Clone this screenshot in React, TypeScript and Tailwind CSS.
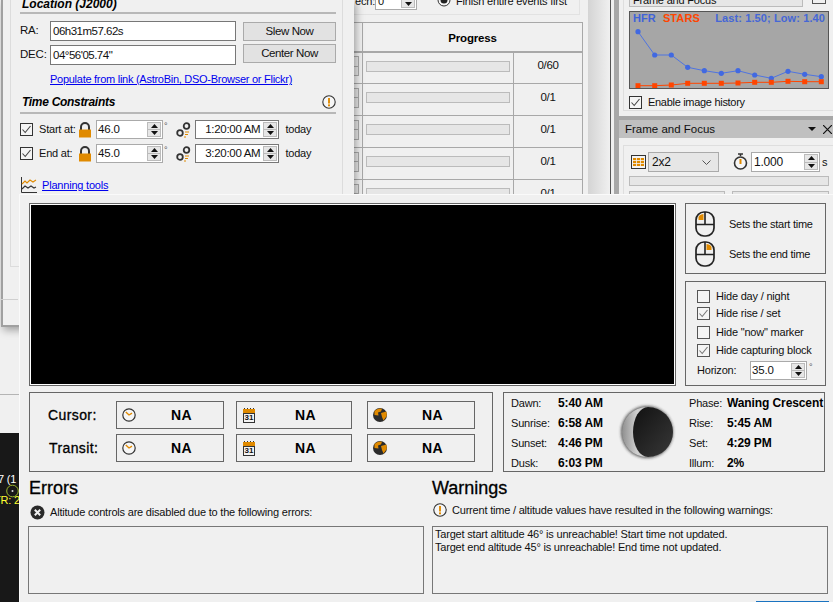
import type { ReactNode } from 'react'

const ORANGE = '#e08a00'
const hfr = [[8, 19.7], [24.7, 43], [41.3, 43], [57.7, 55.3], [74.3, 58.7], [91.3, 61.3], [108, 58.7], [124.7, 63], [141.3, 66.3], [158, 59.3], [174.7, 62.3], [191.3, 64.7]]
const stars = [73.7, 73.7, 73, 71.3, 71.3, 71.3, 71, 70.3, 70.3, 69.3, 69.7, 69.7]

function Check({ on = true, soft = false }: { on?: boolean; soft?: boolean }) {
  return (
    <span className={`flex h-[13px] w-[13px] shrink-0 items-center justify-center border ${soft ? 'border-[#555]' : 'border-[#333]'} bg-[#f4f4f4]`}>
      {on && (
        <svg width="11" height="11" viewBox="0 0 11 11">
          <path d="M1.5 5.5 L4.2 8.5 L9.5 2" fill="none" stroke={soft ? '#777' : '#444'} strokeWidth="1.1" />
        </svg>
      )}
    </span>
  )
}

function Spin({ className = '' }: { className?: string }) {
  return (
    <span className={`flex w-[14px] shrink-0 flex-col border border-[#bbb] bg-[#e6e6e6] ${className}`}>
      <span className="flex flex-1 items-center justify-center border-b border-[#bbb]">
        <svg width="7" height="4" viewBox="0 0 7 4"><path d="M3.5 0 L7 4 L0 4 Z" fill="#111" /></svg>
      </span>
      <span className="flex flex-1 items-center justify-center">
        <svg width="7" height="4" viewBox="0 0 7 4"><path d="M0 0 L7 0 L3.5 4 Z" fill="#111" /></svg>
      </span>
    </span>
  )
}

function Lock() {
  return (
    <svg width="14" height="16" viewBox="0 0 14 16" className="shrink-0">
      <path d="M3 8 V5 a4 4 0 0 1 8 0 V8" fill="none" stroke="#333" strokeWidth="2" />
      <rect x="1" y="7.5" width="12" height="8" fill={ORANGE} />
    </svg>
  )
}

function Link2() {
  return (
    <svg width="15" height="16" viewBox="0 0 15 16" className="shrink-0">
      <circle cx="4" cy="11" r="2.8" fill="none" stroke="#333" strokeWidth="1.8" />
      <circle cx="10.5" cy="4" r="2.8" fill="none" stroke="#333" strokeWidth="1.8" />
      <path d="M9 10 h4 M9 12.5 h3 M8 15 h2" stroke={ORANGE} strokeWidth="1.2" />
    </svg>
  )
}

function WarnIcon({ size = 14 }: { size?: number }) {
  return (
    <svg width={size} height={size} viewBox="0 0 14 14" className="shrink-0">
      <circle cx="7" cy="7" r="6.2" fill="#f6f6f6" stroke="#333" strokeWidth="1.1" />
      <path d="M7 3 V8.4" stroke={ORANGE} strokeWidth="1.9" />
      <rect x="6" y="9.4" width="2" height="1.9" fill={ORANGE} />
    </svg>
  )
}

function MouseIcon({ side }: { side: 'left' | 'right' }) {
  return (
    <svg width="20" height="26" viewBox="0 0 20 26" className="shrink-0">
      <rect x="1" y="1" width="18" height="24" rx="8" fill="#f0f0f0" stroke="#222" strokeWidth="1.7" />
      <path d="M1 13.5 H19 M10 1 V13.5" stroke="#222" strokeWidth="1.6" />
      {side === 'left'
        ? <path d="M3.5 9 V6.5 Q3.5 3.5 8.5 3 V9 Z" fill={ORANGE} />
        : <path d="M16.5 9 V6.5 Q16.5 3.5 11.5 3 V9 Z" fill={ORANGE} />}
    </svg>
  )
}

function ClockIcon() {
  return (
    <svg width="14" height="14" viewBox="0 0 14 14" className="shrink-0">
      <circle cx="7" cy="7" r="6.2" fill="#f6f6f6" stroke="#333" strokeWidth="1.2" />
      <path d="M3.8 4 L7 7 L10 5.2" fill="none" stroke={ORANGE} strokeWidth="1.4" />
    </svg>
  )
}

function CalendarIcon() {
  return (
    <span className="flex w-[14px] shrink-0 justify-center">
      <span className="flex h-[15px] w-[12px] flex-col">
        <span className="flex h-[2px] justify-between px-[1px]">
          <span className="w-[1px] bg-[#333]" />
          <span className="w-[1px] bg-[#333]" />
          <span className="w-[1px] bg-[#333]" />
          <span className="w-[1px] bg-[#333]" />
        </span>
        <span className="h-[4px] bg-[#e08a00]" />
        <span className="flex flex-1 items-center justify-center border border-[#333] bg-[#f4f4f4] text-[8px] leading-none font-bold tracking-[0px]">31</span>
      </span>
    </span>
  )
}

function GlobeIcon() {
  return (
    <svg width="14" height="14" viewBox="0 0 14 14" className="shrink-0">
      <circle cx="7" cy="7" r="7" fill="#2b2b2b" />
      <path d="M1.5 3 Q5 -0.5 9 0.8 L8 3.5 L5 4.5 L5.5 7.5 L1.5 7 Z M8 5 L13.5 3.5 L13.8 8 L10.5 12.5 L9 9 Z" fill={ORANGE} />
    </svg>
  )
}

function NaBox({ width, icon, offset }: { width: string; icon: ReactNode; offset: string }) {
  return (
    <div className={`flex h-[28px] items-center border border-[#666] pl-[5px] ${width}`}>
      {icon}
      <span className={`text-[14px] font-bold tracking-[0.3px] text-black ${offset}`}>NA</span>
    </div>
  )
}

function AstroRow({ label, labelClass }: { label: string; labelClass: string }) {
  return (
    <div className="flex items-center">
      <span className={`w-[68px] text-[14px] tracking-[0.4px] text-black [-webkit-text-stroke:0.3px_black] ${labelClass}`}>{label}</span>
      <NaBox width="w-[108px]" icon={<ClockIcon />} offset="ml-[35px]" />
      <div className="w-[12px]" />
      <NaBox width="w-[116px]" icon={<CalendarIcon />} offset="ml-[39px]" />
      <div className="w-[15px]" />
      <NaBox width="w-[108px]" icon={<GlobeIcon />} offset="ml-[35px]" />
    </div>
  )
}

function InfoRow({ label, value, labelWidth }: { label: string; value: string; labelWidth: string }) {
  return (
    <div className="flex h-[20px] items-center">
      <span className={`text-[11px] ${labelWidth}`}>{label}</span>
      <span className="text-[12px] font-bold tracking-[-0.1px] whitespace-nowrap text-black">{value}</span>
    </div>
  )
}

function Moon() {
  return (
    <svg width="66" height="66" viewBox="-33 -33 66 66">
      <defs>
        <filter id="moonglow" x="-30%" y="-30%" width="160%" height="160%"><feGaussianBlur stdDeviation="1.6" /></filter>
        <linearGradient id="lit" x1="0" x2="1" y1="0" y2="0">
          <stop offset="0" stopColor="#8f8f8f" />
          <stop offset="0.3" stopColor="#d0d0d0" />
          <stop offset="1" stopColor="#bbb" />
        </linearGradient>
        <linearGradient id="dark" x1="0" x2="1" y1="0" y2="1">
          <stop offset="0" stopColor="#111" />
          <stop offset="1" stopColor="#383838" />
        </linearGradient>
      </defs>
      <circle r="26" fill="#222" opacity="0.75" filter="url(#moonglow)" />
      <circle r="25" fill="url(#lit)" />
      <path d="M1 -25 A25 25 0 0 1 1 25 A15 25 0 0 1 1 -25 Z" fill="url(#dark)" />
    </svg>
  )
}

function OptionRow({ label, on = false, h }: { label: string; on?: boolean; h: string }) {
  return (
    <div className={`flex items-center gap-[6px] ${h}`}>
      <Check on={on} soft />
      <span className="text-[11px] whitespace-nowrap">{label}</span>
    </div>
  )
}

function ConstraintRow({ label, alt, time }: { label: string; alt: string; time: string }) {
  return (
    <div className="flex h-[19px] items-center">
      <Check />
      <span className="ml-[6px] w-[39px] text-[11px] whitespace-nowrap">{label}</span>
      <Lock />
      <div className="ml-[4px] flex h-[19px] w-[67px] items-stretch border border-[#aaa] bg-white pl-[1px]">
        <span className="flex-1 text-[11.5px] leading-[17px]">{alt}</span>
        <Spin className="my-[1px] mr-[1px]" />
      </div>
      <span className="ml-[1px] self-start text-[9px] text-[#555]">°</span>
      <div className="ml-[9px]"><Link2 /></div>
      <div className="ml-[4px] flex h-[19px] w-[84px] items-stretch border border-[#777] bg-white">
        <span className="flex-1 text-right text-[11.5px] leading-[17px] tracking-[-0.3px]">{time}</span>
        <Spin className="my-[1px] ml-[3px] mr-[1px]" />
      </div>
      <span className="ml-[6px] text-[11px]">today</span>
    </div>
  )
}

function SequenceRow({ count, h = 'h-[32px]' }: { count: string; h?: string }) {
  return (
    <div className={`grid grid-cols-[23px_151px_68px] border-b border-[#a8a8a8] ${h}`}>
      <div className="flex items-center justify-end border-r border-[#a8a8a8] pr-[3px] pb-[4px]">
        <div className="flex h-[20px] w-[6px] flex-col justify-center border-y border-r border-[#aaa] bg-[#e6e6e6]">
          <div className="h-[1px] bg-[#aaa]" />
        </div>
      </div>
      <div className="flex items-center border-r border-[#a8a8a8] pb-[4px] pl-[3px]">
        <div className="h-[11px] w-[144px] border border-[#bbb] bg-[#e6e6e6]" />
      </div>
      <div className="flex items-center justify-center pb-[4px] text-[11.5px] tracking-[-0.3px]">{count}</div>
    </div>
  )
}

function MessageHead({ title, icon, text, rowClass }: { title: string; icon: ReactNode; text: string; rowClass: string }) {
  return (
    <div className="h-[46px]">
      <div className="h-[24px] text-[18px] leading-[22px] tracking-[0px] text-black [-webkit-text-stroke:0.3px_black]">{title}</div>
      <div className={`flex h-[20px] items-center gap-[5px] pl-[1px] text-[11px] whitespace-nowrap ${rowClass}`}>
        {icon}
        <span>{text}</span>
      </div>
    </div>
  )
}

export default function App() {
  return (
    <div className="relative h-[602px] w-[833px] overflow-hidden bg-[#f0f0f0] tracking-[-0.2px] text-[#111] [font-family:'Liberation_Sans',Arial,sans-serif]">
      {/* image viewer peeking out at the lower left */}
      <div className="absolute top-[394px] left-0 h-[39px] w-[19px] border-t border-[#b4b4b4]" />
      <div className="absolute top-[433px] left-0 h-[169px] w-[19px] overflow-hidden bg-[#181818]">
        <span className="absolute top-[38px] left-[-8px] text-[11px] whitespace-nowrap text-white">07 (1</span>
        <svg className="absolute top-[49px] left-[6px]" width="13" height="18" viewBox="0 0 13 18">
          <circle cx="6.5" cy="9" r="5.8" fill="none" stroke="#9ab52a" strokeWidth="1" />
          <circle cx="6.5" cy="9" r="1" fill="#ddd" />
        </svg>
        <span className="absolute top-[59px] left-[-6px] text-[11px] whitespace-nowrap text-[#ffff33]">TR: 2</span>
      </div>

      {/* sequence table */}
      <div className="absolute top-0 left-[340px] h-[194px] w-[248px] overflow-hidden bg-[#f0f0f0]">
        <div className="flex h-[15px] w-[240px] items-start border-r border-b border-[#e2e2e2]">
          <span className="-mt-[7px] ml-[15px] w-[20px] text-[11px] whitespace-nowrap">ech:</span>
          <div className="flex h-[10px] w-[42px] items-start justify-between border-x border-b border-[#aaa] bg-white pl-[2px]">
            <span className="-mt-[7px] text-[11px]">0</span>
            <span className="mr-[1px] flex h-[8px] w-[14px] items-center justify-center border-x border-b border-[#bbb] bg-[#e6e6e6]">
              <svg width="7" height="4" viewBox="0 0 7 4"><path d="M0 0 L7 0 L3.5 4 Z" fill="#111" /></svg>
            </span>
          </div>
          <svg className="ml-[20px] shrink-0" width="14" height="7" viewBox="0 0 14 7">
            <circle cx="7" cy="0" r="6" fill="#f6f6f6" stroke="#333" strokeWidth="1" />
            <circle cx="7" cy="0" r="3.5" fill="#222" />
          </svg>
          <span className="-mt-[7px] ml-[5px] text-[11px] whitespace-nowrap">Finish entire events first</span>
        </div>
        <div className="mt-[7px] w-[243px] border-t border-r border-[#a8a8a8]">
          <div className="grid h-[30px] grid-cols-[23px_219px] border-b-2 border-[#a8a8a8]">
            <div className="border-r border-[#a8a8a8]" />
            <div className="flex items-center justify-center pt-[3px] text-[11.5px] font-bold text-black">Progress</div>
          </div>
          <SequenceRow count="0/60" h="h-[31px]" />
          <SequenceRow count="0/1" />
          <SequenceRow count="0/1" />
          <SequenceRow count="0/1" />
          <SequenceRow count="0/1" />
        </div>
      </div>
      <div className="absolute top-0 left-[588px] h-[194px] w-[22px] bg-gradient-to-r from-[#d4d4d4] to-[#f0f0f0]" />

      {/* right dock */}
      <div className="absolute top-0 left-[610px] flex h-[194px] w-[223px] border-l border-[#555] bg-[#f0f0f0] pl-[3px]">
        <div className="w-full bg-[#a8a8a8] pl-[5px]">
          <div className="h-[116px] bg-[#f0f0f0] pl-[4px]">
            <div className="h-[111px] border-b border-l border-[#dedede] pl-[5px]">
              <div className="flex h-[7px] items-start">
                <div className="h-[7px] w-[174px] overflow-hidden border-x border-b border-[#bbb] bg-[#e6e6e6] pl-[3px] text-[11px] leading-[0px]">Frame and Focus</div>
                <div className="ml-[9px] h-[4px] w-[14px] border-x border-b border-[#555]" />
              </div>
              <div className="relative mt-[4px] h-[78px] w-[200px] overflow-hidden border border-[#555] bg-[#a6a6a6]">
                <div className="flex h-[12px] items-center justify-between px-[3px] text-[11px] leading-none font-bold tracking-[0.1px]">
                  <span className="flex gap-[7px]">
                    <span className="text-[#3f63d8]">HFR</span>
                    <span className="text-[#ff4500]">STARS</span>
                  </span>
                  <span className="text-[#4567d6]">Last: 1.50; Low: 1.40</span>
                </div>
                <svg className="absolute top-0 left-0" width="198" height="76" viewBox="0 0 198 76">
                  <polyline points={hfr.map(p => p.join(',')).join(' ')} fill="none" stroke="#4f74e0" strokeWidth="1" />
                  {hfr.map(p => <circle key={p[0]} cx={p[0]} cy={p[1]} r="2.6" fill="#4169e1" />)}
                  <polyline points={hfr.map((p, i) => `${p[0]},${stars[i]}`).join(' ')} fill="none" stroke="#ff4500" strokeWidth="1" />
                  {hfr.map((p, i) => <rect key={p[0]} x={p[0] - 2.5} y={stars[i] - 2.5} width="5" height="5" fill="#ff4500" />)}
                </svg>
              </div>
              <div className="mt-[5px] flex items-center gap-[6px] text-[11px] tracking-[-0.3px]">
                <Check />
                <span>Enable image history</span>
              </div>
            </div>
          </div>
          <div className="mt-[4px] flex h-[18px] items-center justify-between bg-[#c0c0c0] pr-[1px] pl-[6px]">
            <span className="pt-[2px] text-[11.5px] tracking-[0px]">Frame and Focus</span>
            <span className="flex items-center gap-[7px]">
              <svg width="8" height="4" viewBox="0 0 8 4"><path d="M0 0 H8 L4 4 Z" fill="#111" /></svg>
              <svg width="9" height="9" viewBox="0 0 9 9"><path d="M0 0 L9 9 M9 0 L0 9" stroke="#111" strokeWidth="1.2" /></svg>
            </span>
          </div>
          <div className="h-[56px] bg-[#f0f0f0] pt-[7px] pl-[4px]">
            <div className="h-full border-t border-l border-[#dedede] pl-[5px]">
              <div className="flex h-[26px] items-end">
                <svg className="mb-[3px] ml-[2px]" width="15" height="14" viewBox="0 0 15 14">
                  <rect x="0.5" y="0.5" width="14" height="13" fill="#f4f4f4" stroke="#333" />
                  <path d="M2 3 H13 V11 H2 Z" fill={ORANGE} />
                  <path d="M2 5.5 H13 M2 8.5 H13 M5.5 3 V11 M9.5 3 V11" stroke="#f4f4f4" strokeWidth="0.8" />
                </svg>
                <div className="ml-[2px] flex h-[20px] w-[71px] items-center justify-between border border-[#aaa] bg-[#e6e6e6] px-[3px] text-[12px]">
                  <span>2x2</span>
                  <svg className="mr-[4px]" width="9" height="5" viewBox="0 0 9 5"><path d="M0.5 0.5 L4.5 4.5 L8.5 0.5" fill="none" stroke="#555" /></svg>
                </div>
                <svg className="mb-[2px] ml-[14px]" width="15" height="17" viewBox="0 0 15 17">
                  <path d="M5 1 H10 M7.5 1 V3" stroke="#333" strokeWidth="1.5" />
                  <circle cx="7.5" cy="10" r="6" fill="#f6f6f6" stroke="#333" strokeWidth="1.6" />
                  <path d="M7.5 6 V11" stroke={ORANGE} strokeWidth="2" />
                </svg>
                <div className="ml-[3px] flex h-[20px] w-[69px] items-stretch border border-[#aaa] bg-white">
                  <span className="flex-1 pl-[2px] text-[12px] leading-[18px]">1.000</span>
                  <Spin className="my-[1px] mr-[1px]" />
                </div>
                <span className="mb-[2px] ml-[2px] text-[11px]">s</span>
              </div>
              <div className="mt-[4px] h-[10px] w-[200px] border border-[#bbb] bg-[#e6e6e6]" />
              <div className="mt-[5px] flex gap-[7px]">
                <div className="h-[6px] w-[96px] border border-[#bbb] bg-[#e6e6e6]" />
                <div className="h-[6px] w-[97px] border border-[#bbb] bg-[#e6e6e6]" />
              </div>
            </div>
          </div>
        </div>
      </div>

      {/* target window */}
      <div className="absolute top-0 left-[1px] h-[327px] w-[353px] border-b-2 border-l-2 border-[#a0a0a0] bg-[#f0f0f0] shadow-[2px_3px_8px_rgba(0,0,0,0.35)]">
        <div className="ml-[7px] h-[271px] w-[333px] border-r border-b border-l border-[#dcdcdc] pr-[6px] pl-[9px]">
          <div className="-mt-[4px] flex h-[18px] items-center border-b-2 border-[#b8b8b8] text-[12px] font-bold tracking-[0px] text-black italic"><span className="pl-[2px]">Location (J2000)</span></div>
          <div className="mt-[7px] flex gap-[7px]">
            <div className="flex w-[216px] flex-col gap-[4px]">
              {[['RA:', '06h31m57.62s'], ['DEC:', '04°56\'05.74"']].map(([k, v]) => (
                <div key={k} className="flex h-[20px] items-center">
                  <span className="w-[30px] text-[11.5px]">{k}</span>
                  <div className="h-[20px] w-[186px] border border-[#777] bg-white pl-[2px] text-[11.5px] leading-[18px] tracking-[-0.5px]">{v}</div>
                </div>
              ))}
            </div>
            <div className="mt-[1px] flex flex-col gap-[3px] tracking-[-0.4px]">
              <div className="flex h-[19px] w-[93px] items-center justify-center border border-[#aaa] bg-[#e2e2e2] text-[11.5px]">Slew Now</div>
              <div className="flex h-[19px] w-[93px] items-center justify-center border border-[#aaa] bg-[#e2e2e2] text-[11.5px]">Center Now</div>
            </div>
          </div>
          <div className="mt-[7px] h-[14px] pl-[30px] text-[11px] leading-[14px] tracking-[-0.27px] text-[#0000ee] underline">Populate from link (AstroBin, DSO-Browser or Flickr)</div>
          <div className="mt-[8px] flex h-[20px] items-center justify-between border-b-2 border-[#b8b8b8] pb-[2px] text-[12px] font-bold tracking-[-0.3px] text-black italic">
            <span className="pl-[2px]">Time Constraints</span>
            <WarnIcon />
          </div>
          <div className="mt-[6px] flex flex-col gap-[5px]">
            <ConstraintRow label="Start at:" alt="46.0" time="1:20:00 AM" />
            <ConstraintRow label="End at:" alt="45.0" time="3:20:00 AM" />
          </div>
          <div className="mt-[14px] flex items-center gap-[5px] pl-[1px]">
            <svg width="16" height="16" viewBox="0 0 16 16">
              <path d="M0.5 0 V15.5 H16" fill="none" stroke="#333" />
              <path d="M1 7 L4 4 L6 6 L9 3 L12 5 L15 3" fill="none" stroke={ORANGE} strokeWidth="1.1" />
              <path d="M1 12 L4 9 L7 11 L10 9 L13 11 L15 10" fill="none" stroke="#333" strokeWidth="1.1" />
            </svg>
            <span className="text-[11px] text-[#0000ee] underline">Planning tools</span>
          </div>
        </div>
        <div className="mt-[32px] -ml-[2px] w-[17px] border-t border-[#cfcfcf]" />
      </div>

      {/* altitude / time dialog */}
      <div className="absolute top-[194px] left-[19px] h-[408px] w-[814px] border-t border-l border-[#fafafa] bg-[#f0f0f0] pt-[8px] pl-[9px]">
        <div className="flex gap-[9px]">
          <div className="h-[183px] w-[647px] border border-[#666] bg-white p-[1px]">
            <div className="h-full w-full bg-black" />
          </div>
          <div className="flex w-[141px] flex-col gap-[7px]">
            <div className="flex h-[71px] flex-col border border-[#666] pt-[5px] pl-[9px] tracking-[-0.26px]">
              <div className="flex h-[30px] items-center gap-[14px] text-[11px]"><MouseIcon side="left" /><span>Sets the start time</span></div>
              <div className="flex h-[30px] items-center gap-[14px] text-[11px]"><MouseIcon side="right" /><span>Sets the end time</span></div>
            </div>
            <div className="h-[105px] border border-[#666] pt-[5px] pl-[11px]">
              <OptionRow label="Hide day / night" h="h-[18px]" />
              <OptionRow label="Hide rise / set" on h="h-[17px]" />
              <OptionRow label={'Hide "now" marker'} h="h-[20px]" />
              <OptionRow label="Hide capturing block" on h="h-[17px]" />
              <div className="mt-[2px] flex items-center">
                <span className="w-[53px] text-[11px]">Horizon:</span>
                <div className="flex h-[19px] w-[57px] items-stretch border border-[#aaa] bg-white pl-[1px]">
                  <span className="flex-1 text-[11.5px] leading-[17px]">35.0</span>
                  <Spin className="my-[1px] mr-[1px]" />
                </div>
                <span className="ml-[2px] self-start text-[9px] text-[#555]">°</span>
              </div>
            </div>
          </div>
        </div>

        <div className="mt-[6px] flex gap-[10px]">
          <div className="flex h-[80px] w-[464px] flex-col gap-[5px] border border-[#666] pt-[8px] pl-[18px]">
            <AstroRow label="Cursor:" labelClass="" />
            <AstroRow label="Transit:" labelClass="pl-[1px]" />
          </div>
          <div className="flex h-[80px] w-[322px] border border-[#666]">
            <div className="w-[110px] pl-[7px]">
              <InfoRow label="Dawn:" value="5:40 AM" labelWidth="w-[47px]" />
              <InfoRow label="Sunrise:" value="6:58 AM" labelWidth="w-[47px]" />
              <InfoRow label="Sunset:" value="4:46 PM" labelWidth="w-[47px]" />
              <InfoRow label="Dusk:" value="6:03 PM" labelWidth="w-[47px]" />
            </div>
            <div className="flex w-[66px] items-center justify-center"><Moon /></div>
            <div className="pl-[9px]">
              <InfoRow label="Phase:" value="Waning Crescent" labelWidth="w-[38px]" />
              <InfoRow label="Rise:" value="5:45 AM" labelWidth="w-[38px]" />
              <InfoRow label="Set:" value="4:29 PM" labelWidth="w-[38px]" />
              <InfoRow label="Illum:" value="2%" labelWidth="w-[38px]" />
            </div>
          </div>
        </div>

        <div className="mt-[5px] -ml-[1px] flex gap-[8px]">
          <div className="w-[396px]">
            <div className="pl-[1px]">
              <MessageHead
                title="Errors"
                text="Altitude controls are disabled due to the following errors:"
                rowClass="mt-[1px]"
                icon={
                  <svg width="15" height="15" viewBox="0 0 15 15" className="shrink-0">
                    <circle cx="7.5" cy="7.5" r="7" fill="#2a2a2a" />
                    <path d="M4.8 4.8 L10.2 10.2 M10.2 4.8 L4.8 10.2" stroke="#f0f0f0" strokeWidth="2" />
                  </svg>
                }
              />
            </div>
            <div className="mt-[3px] h-[68px] border border-[#777]" />
          </div>
          <div className="w-[396px]">
            <MessageHead title="Warnings" text="Current time / altitude values have resulted in the following warnings:" rowClass="-mt-[1px]" icon={<WarnIcon />} />
            <div className="mt-[3px] h-[68px] border border-[#777] pt-[1px] pl-[2px] text-[11px] leading-[13px]">
              <div>Target start altitude 46° is unreachable! Start time not updated.</div>
              <div>Target end altitude 45° is unreachable! End time not updated.</div>
            </div>
          </div>
        </div>
      </div>

      {/* top edge of the dialog's default button */}
      <div className="absolute top-[601px] left-[756px] h-[1px] w-[73px] bg-[#1a73c0]" />
    </div>
  )
}
